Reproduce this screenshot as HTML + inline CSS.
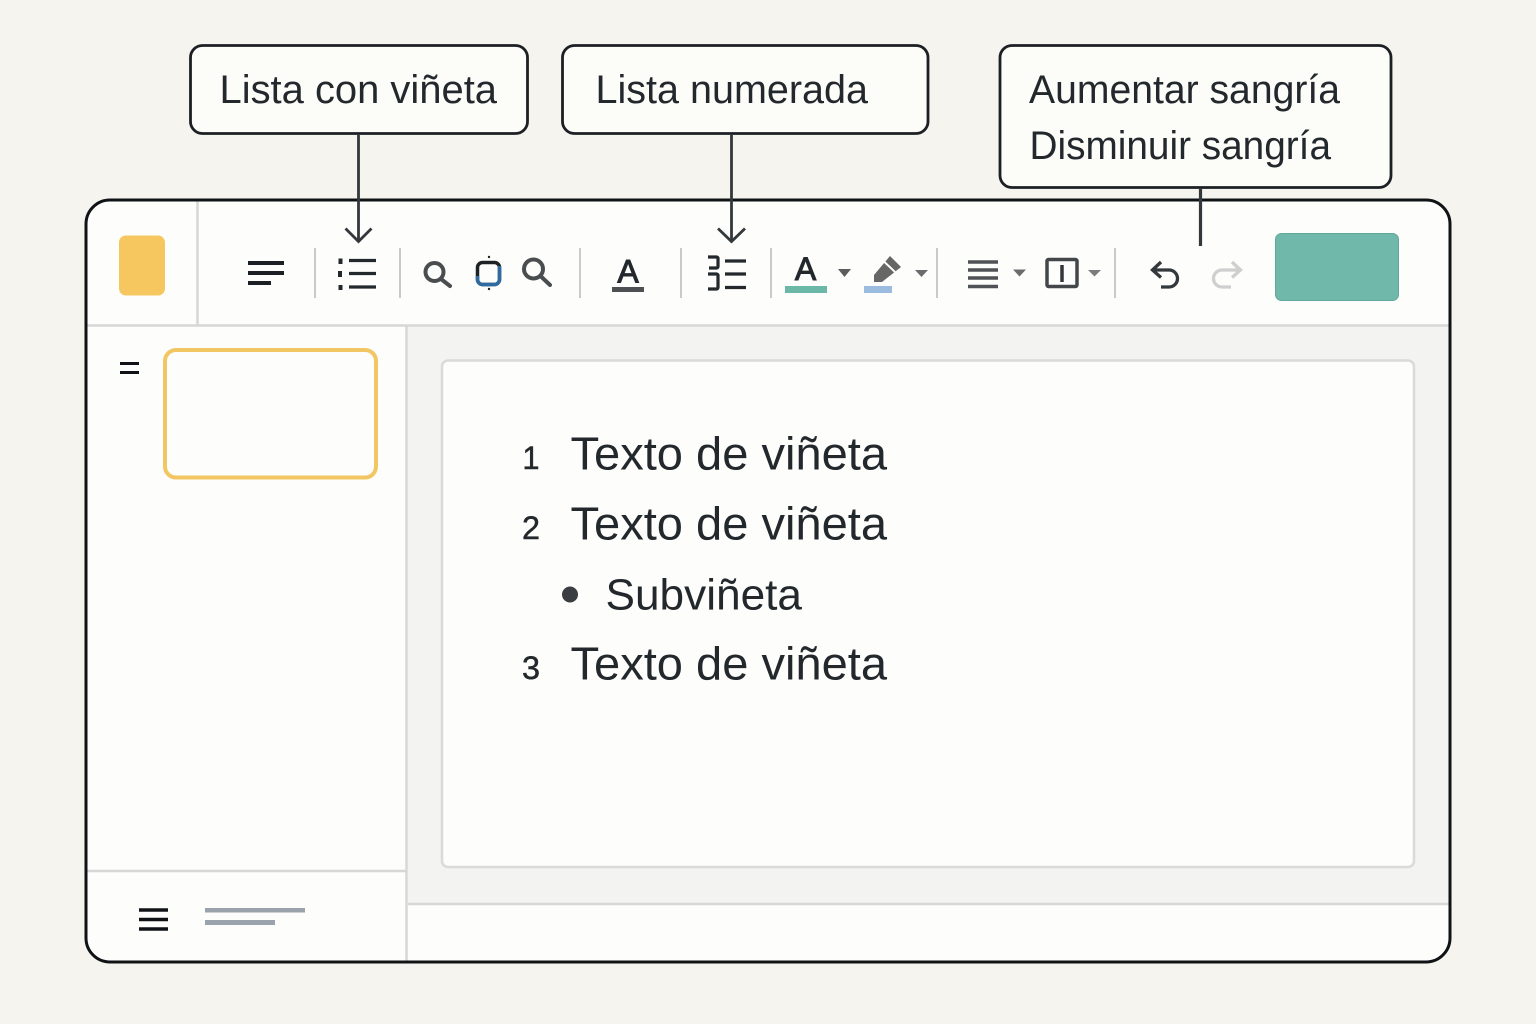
<!DOCTYPE html>
<html lang="es">
<head>
<meta charset="utf-8">
<title>Lista con viñeta</title>
<style>
html,body{margin:0;padding:0;background:#f6f4ef;width:1536px;height:1024px;overflow:hidden}
svg{display:block}
text{font-family:"Liberation Sans",sans-serif;fill:#23282c}
</style>
</head>
<body>
<svg width="1536" height="1024" viewBox="0 0 1536 1024" xmlns="http://www.w3.org/2000/svg">
<rect width="1536" height="1024" fill="#f6f4ef"/>

<!-- window -->
<rect x="86" y="200" width="1364" height="762" rx="24" fill="#fdfdfb"/>
<path d="M408 327H1449V903H408Z" fill="#f3f3f1"/>
<g stroke="#d6d7d6" stroke-width="2.500" fill="none">
<path d="M87 325.500H1449"/>
<path d="M197.500 201V325"/>
<path d="M406.500 326V961"/>
<path d="M408 904H1449"/>
<path d="M87 871H406"/>
</g>
<rect x="442" y="360.500" width="972" height="506.500" rx="6" fill="#fdfdfb" stroke="#d9dad9" stroke-width="2.500"/>
<rect x="86" y="200" width="1364" height="762" rx="24" fill="none" stroke="#101316" stroke-width="3"/>

<!-- callouts -->
<g fill="#fcfcf9" stroke="#1c2024" stroke-width="2.800">
<rect x="190.500" y="45.500" width="337" height="88" rx="12"/>
<rect x="562.500" y="45.500" width="365.500" height="88" rx="12"/>
<rect x="1000" y="45.500" width="391" height="142" rx="12"/>
</g>
<text x="219.500" y="103" font-size="40" textLength="277.500" lengthAdjust="spacingAndGlyphs">Lista con viñeta</text>
<text x="595.500" y="103" font-size="40" textLength="272.500" lengthAdjust="spacingAndGlyphs">Lista numerada</text>
<text x="1029" y="103" font-size="40" textLength="311" lengthAdjust="spacingAndGlyphs">Aumentar sangría</text>
<text x="1029.500" y="159" font-size="40" textLength="301.500" lengthAdjust="spacingAndGlyphs">Disminuir sangría</text>

<!-- connectors -->
<g stroke="#33383c" stroke-width="2.800" fill="none">
<path d="M358.500 134V241"/>
<path d="M345.500 228.500L358.500 241.500L371.500 228.500"/>
<path d="M731.500 134V241"/>
<path d="M718 228.500L731.500 241.500L745 228.500"/>
<path d="M1200.500 188V246" stroke-width="3.200"/>
</g>

<!-- logo -->
<rect x="119" y="235.500" width="46" height="60" rx="7" fill="#f6c75f"/>

<!-- separators -->
<g stroke="#c9cac9" stroke-width="2" fill="none">
<path d="M315 248V298M400 248V298M580 248V298M681 248V298M771 248V298M937 248V298M1115 248V298"/>
</g>

<!-- align -->
<g stroke="#1c2024" stroke-width="4" fill="none">
<path d="M248 263H284M248 273H284M248 283H271"/>
</g>

<!-- bullet list -->
<g stroke="#23282c" stroke-width="3.200" fill="none">
<path d="M349 260.500H376M349 273.500H376M349 287H376"/>
<path d="M340.500 258.500V264M340 271V277M340.500 285V290" stroke-width="4"/>
</g>

<!-- search / frame -->
<g stroke="#4a4d4f" stroke-width="4" fill="none" stroke-linecap="round">
<circle cx="434.500" cy="272" r="9"/>
<path d="M441 279L450 286"/>
<circle cx="533.500" cy="269" r="9.500"/>
<path d="M540.500 276L550 285"/>
</g>
<rect x="477.500" y="262.500" width="22" height="22" rx="5" fill="none" stroke="#1f2225" stroke-width="3.500"/>
<path d="M477.500 276V279.500a5 5 0 0 0 5 5H494.500a5 5 0 0 0 5-5V266" fill="none" stroke="#2f6ba3" stroke-width="3.500"/>
<circle cx="489" cy="257" r="1.200" fill="#222"/>
<circle cx="489" cy="289" r="1.200" fill="#222"/>

<!-- A underlined -->
<text x="628" y="282.500" font-size="32" text-anchor="middle" stroke="#23282c" stroke-width="1">A</text>
<rect x="612" y="287" width="32" height="5" fill="#4d5052"/>

<!-- numbered list -->
<g stroke="#23282c" stroke-width="3.200" fill="none">
<path d="M708 257H716.500a1.500 1.500 0 0 1 1.500 1.500V266.500a1.500 1.500 0 0 1-1.500 1.500H709"/>
<path d="M708 274H716.500a1.500 1.500 0 0 1 1.500 1.500V287.500a1.500 1.500 0 0 1-1.500 1.500H708"/>
<path d="M725 261H746M725 274H746M725 287.500H746"/>
</g>

<!-- text colour -->
<text x="805.500" y="280" font-size="32" text-anchor="middle" stroke="#23282c" stroke-width="1">A</text>
<rect x="785" y="286" width="42" height="7" fill="#6bb8a8"/>
<path d="M838 269H851L844.500 277Z" fill="#5a5c5e"/>

<!-- highlighter -->
<path d="M890 256L901 267L882 282H874V275Z" fill="#666"/>
<path d="M884.500 262L895 272" stroke="#fdfdfa" stroke-width="2" fill="none"/>
<rect x="864" y="286" width="28" height="7" fill="#9cbcdf"/>
<path d="M915 270H928L921.500 277Z" fill="#6a6c6e"/>

<!-- line spacing -->
<g stroke="#505355" stroke-width="3.500" fill="none">
<path d="M968 262H998M968 270H998M968 278H998M968 286.500H998"/>
</g>
<path d="M1013 269.500H1026L1019.500 276.500Z" fill="#6a6c6e"/>

<!-- box -->
<rect x="1047" y="259.500" width="30" height="27" rx="1.500" fill="none" stroke="#44474a" stroke-width="3.500"/>
<path d="M1062 265V282" stroke="#33363a" stroke-width="3.500"/>
<path d="M1088 270H1101L1094.500 276.500Z" fill="#7a7c7e"/>

<!-- undo redo -->
<path d="M1161 262L1152.500 270L1161 277.500M1152.500 270H1169a8.500 8.500 0 0 1 0 17H1161" fill="none" stroke="#33383c" stroke-width="3.300"/>
<path d="M1232 262L1240.500 270L1232 277.500M1240.500 270H1222a8.500 8.500 0 0 0 0 17H1231" fill="none" stroke="#cfcfcf" stroke-width="3.300"/>

<!-- teal button -->
<rect x="1275.500" y="233.500" width="123" height="67" rx="6" fill="#70b8aa" stroke="#62a899" stroke-width="1"/>

<!-- side panel -->
<g stroke="#101316" stroke-width="3" fill="none">
<path d="M120 363.500H139M120 372.500H139"/>
</g>
<rect x="165" y="350" width="211" height="127.500" rx="11" fill="#fdfdfb" stroke="#f3c664" stroke-width="4"/>

<!-- slide text -->
<text x="522.500" y="469" font-size="32" textLength="17" lengthAdjust="spacingAndGlyphs" stroke="#23282c" stroke-width=".5">1</text>
<text x="570.500" y="469.500" font-size="46" textLength="316.500" lengthAdjust="spacingAndGlyphs">Texto de viñeta</text>
<text x="522" y="539" font-size="32" textLength="18" lengthAdjust="spacingAndGlyphs" stroke="#23282c" stroke-width=".5">2</text>
<text x="570.500" y="539.500" font-size="46" textLength="316.500" lengthAdjust="spacingAndGlyphs">Texto de viñeta</text>
<circle cx="570" cy="594.500" r="8" fill="#3a3e42"/>
<text x="605.500" y="609.500" font-size="44" textLength="196.500" lengthAdjust="spacingAndGlyphs">Subviñeta</text>
<text x="522" y="679" font-size="32" textLength="18" lengthAdjust="spacingAndGlyphs" stroke="#23282c" stroke-width=".5">3</text>
<text x="570.500" y="679.500" font-size="46" textLength="316.500" lengthAdjust="spacingAndGlyphs">Texto de viñeta</text>

<!-- footer -->
<g stroke="#101316" stroke-width="3.500" fill="none">
<path d="M139 910H168M139 919.500H168M139 929H168"/>
</g>
<rect x="205" y="908" width="100" height="4.500" fill="#9aa3ab"/>
<rect x="205" y="920" width="70" height="5" fill="#9aa3ab"/>
</svg>
</body>
</html>
